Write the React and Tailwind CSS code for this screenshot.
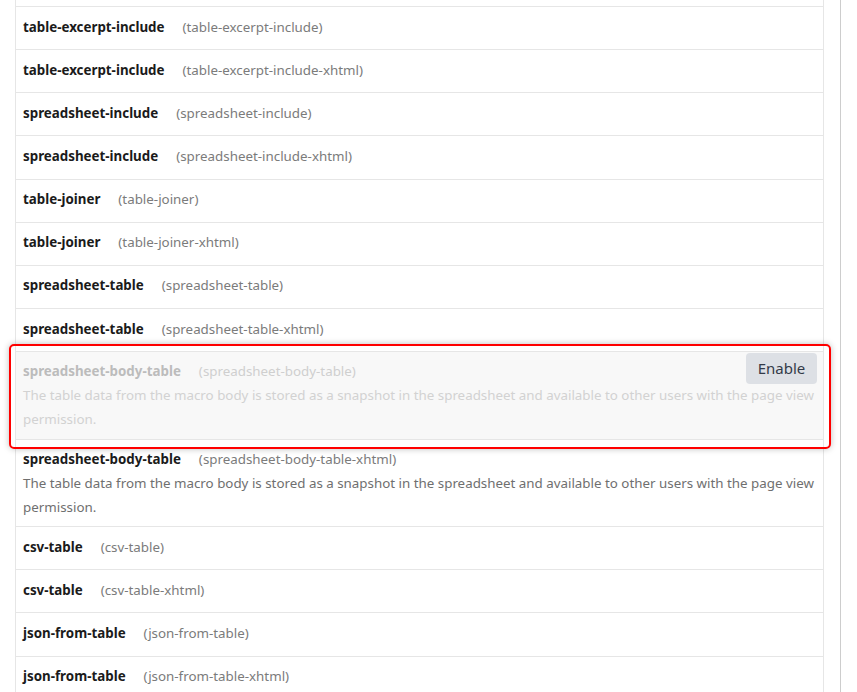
import React from "react";

const ROWS = [
  { title: "table-excerpt-include", key: "table-excerpt-include" },
  { title: "table-excerpt-include", key: "table-excerpt-include-xhtml" },
  { title: "spreadsheet-include", key: "spreadsheet-include" },
  { title: "spreadsheet-include", key: "spreadsheet-include-xhtml" },
  { title: "table-joiner", key: "table-joiner" },
  { title: "table-joiner", key: "table-joiner-xhtml" },
  { title: "spreadsheet-table", key: "spreadsheet-table" },
  { title: "spreadsheet-table", key: "spreadsheet-table-xhtml" },
  {
    title: "spreadsheet-body-table",
    key: "spreadsheet-body-table",
    desc: "The table data from the macro body is stored as a snapshot in the spreadsheet and available to other users with the page view permission.",
    disabled: true,
  },
  {
    title: "spreadsheet-body-table",
    key: "spreadsheet-body-table-xhtml",
    desc: "The table data from the macro body is stored as a snapshot in the spreadsheet and available to other users with the page view permission.",
  },
  { title: "csv-table", key: "csv-table" },
  { title: "csv-table", key: "csv-table-xhtml" },
  { title: "json-from-table", key: "json-from-table" },
  { title: "json-from-table", key: "json-from-table-xhtml" },
];

function MacroRow({ row }) {
  if (row.disabled) {
    return (
      <div className="relative border-b border-[#e6e6e6] bg-[#f8f8f8] pl-[7px] pr-[90px] pt-[7px] pb-[8px]">
        <div className="flex items-center leading-[24px]">
          <span className="font-bold text-[#bcbcbc]">{row.title}</span>
          <span className="ml-[18px] text-[#cfcfcf]">({row.key})</span>
        </div>
        <div className="leading-[24px] text-[#d2d2d2] -mr-[85px]">{row.desc}</div>
        <button className="absolute right-[6px] top-[1px] h-[31px] w-[71px] rounded-[4px] bg-[#dde0e5] text-[15px] text-[#333a48]">
          Enable
        </button>
        <div className="pointer-events-none absolute -left-[7px] -right-[8px] -top-[8px] -bottom-[10px] rounded-[5px] border-2 border-[#ff0000] shadow-[0_0_6px_rgba(0,0,0,0.25)]" />
      </div>
    );
  }
  if (row.desc) {
    return (
      <div className="border-b border-[#e6e6e6] pl-[7px] pr-[5px] pt-[7px] pb-[7px]">
        <div className="flex items-center leading-[24px]">
          <span className="font-bold text-[#1b1b1b]">{row.title}</span>
          <span className="ml-[18px] text-[#7b7b7b]">({row.key})</span>
        </div>
        <div className="leading-[24px] text-[#6f6f6f]">{row.desc}</div>
      </div>
    );
  }
  return (
    <div className="flex h-[43.15px] items-center border-b border-[#e6e6e6] px-[7px] pb-[3px]">
      <span className="font-bold text-[#1b1b1b]">{row.title}</span>
      <span className="ml-[18px] text-[#7b7b7b]">({row.key})</span>
    </div>
  );
}

export default function App() {
  return (
    <div
      className="flex h-[692px] overflow-hidden bg-white text-[13.35px]"
      style={{ fontFamily: "'Noto Sans', 'Open Sans', sans-serif" }}
    >
      <div className="ml-[15px] w-[809px] shrink-0 border-x border-[#e6e6e6]">
        <div className="h-[7px] border-b border-[#e6e6e6]" />
        {ROWS.map((row, i) => (
          <MacroRow key={i} row={row} />
        ))}
      </div>
      <div className="ml-[16px] w-px shrink-0 bg-[#cdcdcd]" />
    </div>
  );
}
